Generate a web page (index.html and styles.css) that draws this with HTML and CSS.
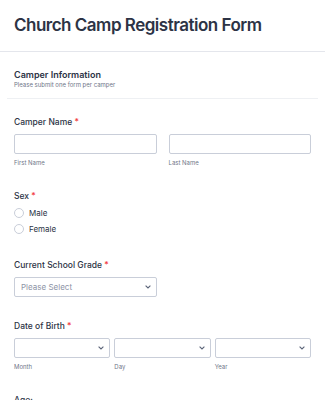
FILE: index.html
```html
<!DOCTYPE html>
<html lang="en">
<head>
<meta charset="utf-8">
<title>Church Camp Registration Form</title>
<link rel="stylesheet" href="styles.css">
</head>
<body>
<header class="form-header">
  <h1 class="form-title">Church Camp Registration Form</h1>
</header>
<main class="form-body">
  <section class="section-head">
    <h2 class="section-title">Camper Information</h2>
    <p class="section-sub">Please submit one form per camper</p>
  </section>

  <div class="field">
    <label class="field-label">Camper Name <span class="req">*</span></label>
    <div class="row two">
      <div class="col">
        <div class="input"></div>
        <span class="sublabel">First Name</span>
      </div>
      <div class="col">
        <div class="input"></div>
        <span class="sublabel">Last Name</span>
      </div>
    </div>
  </div>

  <div class="field">
    <label class="field-label">Sex <span class="req">*</span></label>
    <div class="radios">
      <div class="radio"><span class="circle"></span><span class="radio-text">Male</span></div>
      <div class="radio"><span class="circle"></span><span class="radio-text">Female</span></div>
    </div>
  </div>

  <div class="field">
    <label class="field-label">Current School Grade <span class="req">*</span></label>
    <div class="select grade">
      <span class="placeholder">Please Select</span>
      <svg class="chev" width="6" height="4" viewBox="0 0 6 4"><path d="M0.6 0.6 L3 3 L5.4 0.6" fill="none" stroke="#5b6478" stroke-width="1.1"/></svg>
    </div>
  </div>

  <div class="field">
    <label class="field-label">Date of Birth <span class="req">*</span></label>
    <div class="row three">
      <div class="col">
        <div class="select"><span class="placeholder"></span><svg class="chev" width="6" height="4" viewBox="0 0 6 4"><path d="M0.6 0.6 L3 3 L5.4 0.6" fill="none" stroke="#5b6478" stroke-width="1.1"/></svg></div>
        <span class="sublabel">Month</span>
      </div>
      <div class="col">
        <div class="select"><span class="placeholder"></span><svg class="chev" width="6" height="4" viewBox="0 0 6 4"><path d="M0.6 0.6 L3 3 L5.4 0.6" fill="none" stroke="#5b6478" stroke-width="1.1"/></svg></div>
        <span class="sublabel">Day</span>
      </div>
      <div class="col">
        <div class="select"><span class="placeholder"></span><svg class="chev" width="6" height="4" viewBox="0 0 6 4"><path d="M0.6 0.6 L3 3 L5.4 0.6" fill="none" stroke="#5b6478" stroke-width="1.1"/></svg></div>
        <span class="sublabel">Year</span>
      </div>
    </div>
  </div>

  <div class="field">
    <label class="field-label">Age:</label>
  </div>
</main>
</body>
</html>
```

FILE: styles.css
```css
* { box-sizing: border-box; }
html, body { margin: 0; padding: 0; background: #ffffff; }
body {
  font-family: Inter, "Noto Sans", "Liberation Sans", sans-serif;
  color: #2c3345;
  width: 325px;
  height: 400px;
  overflow: hidden;
}
.form-header {
  padding: 13px 14px 14px;
  border-bottom: 1px solid #e4e6ec;
}
.form-title {
  margin: 0;
  font-size: 17px;
  line-height: 24px;
  font-weight: 600;
  letter-spacing: -0.5px;
  color: #2c3345;
}
.form-body {
  padding: 0 7px;
}
.section-head {
  padding: 17px 7px 9px;
  border-bottom: 1px solid #eef0f3;
}
.section-title {
  margin: 0;
  font-size: 9px;
  line-height: 11px;
  font-weight: 600;
  color: #2c3345;
}
.section-sub {
  margin: 1px 0 0;
  font-size: 6px;
  line-height: 8px;
  color: #6f7689;
}
.field {
  padding: 17px 7px 6px;
}
.field-label {
  display: block;
  font-size: 8.5px;
  line-height: 12px;
  font-weight: 500;
  color: #2c3345;
  margin-bottom: 6px;
}
.req { color: #f23a3c; }
.row {
  display: grid;
  gap: 12px;
}
.row.two { grid-template-columns: 1fr 1fr; }
.row.three { grid-template-columns: 1fr 1fr 1fr; gap: 4px; }
.col { display: flex; flex-direction: column; }
.input, .select {
  height: 20px;
  border: 1px solid #c9ced9;
  border-radius: 2px;
  background: #fff;
}
.select {
  display: flex;
  align-items: center;
  justify-content: space-between;
  padding: 0 5px 0 6px;
}
.select.grade { width: calc((100% - 12px) / 2); }
.placeholder {
  font-size: 8px;
  color: #8d94a6;
}
.chev { display: block; }
.sublabel {
  font-size: 6px;
  line-height: 8px;
  color: #6f7689;
  margin-top: 5px;
}
.radios {
  display: flex;
  flex-direction: column;
  gap: 6px;
  margin-bottom: 2px;
}
.radio { display: flex; align-items: center; gap: 5px; height: 10px; }
.circle {
  width: 10px;
  height: 10px;
  border: 1px solid #c9ced9;
  border-radius: 50%;
}
.radio-text { font-size: 8px; color: #2c3345; }
```
